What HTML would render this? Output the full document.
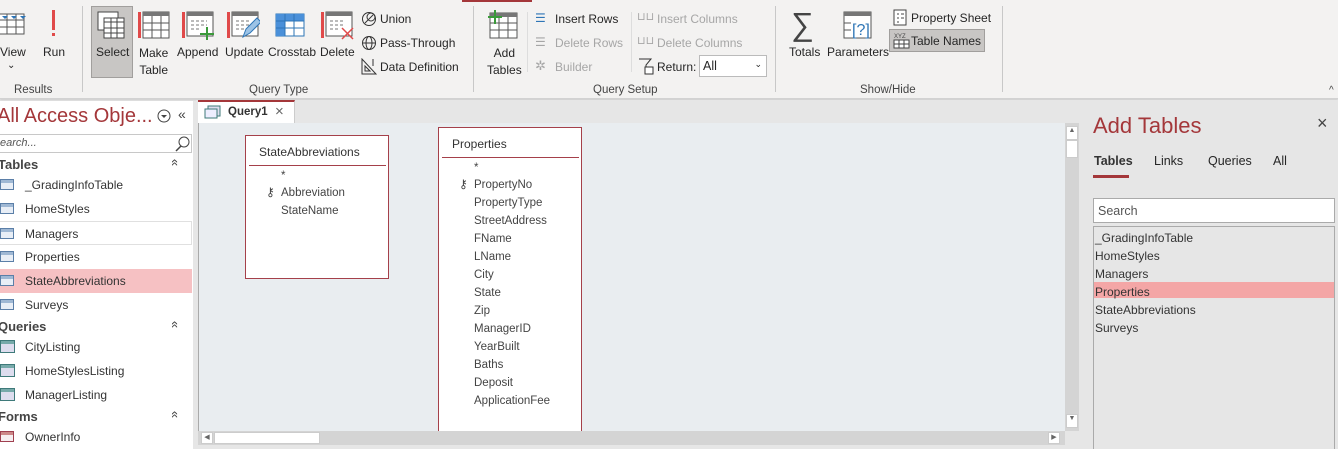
<!DOCTYPE html>
<html><head><meta charset="utf-8"><style>
*{margin:0;padding:0;box-sizing:border-box}
body{width:1338px;height:449px;overflow:hidden;background:#e6e6e6;font-family:"Liberation Sans",sans-serif;color:#262626;position:relative}
.a{position:absolute;white-space:nowrap}
.rb{position:absolute;left:0;top:0;width:1338px;height:99px;background:#f3f2f1;border-bottom:1px solid #d2d2d2;box-shadow:0 1px 2px rgba(0,0,0,.12)}
.lbl{font-size:12px;color:#262626;text-align:center}
.sm{font-size:12px}
.dis{color:#a6a6a6}
.gl{font-size:11.5px;color:#444}
.sep{position:absolute;width:1px;background:#c8c8c8}
.nav{position:absolute;left:0;top:101px;width:193px;height:348px;background:#fff}
.ni{position:absolute;left:0;width:192px;height:24px;font-size:12px;color:#333}
.ni span{position:absolute;left:25px;top:5px}
.nh{position:absolute;left:-2px;font-size:13px;font-weight:bold;color:#444}
.ch{position:absolute;left:172px;font-size:13px;color:#444;transform:rotate(90deg)}
.ic{position:absolute;left:0;top:6px;width:14px;height:11px;border:1px solid #5b7fa8;background:linear-gradient(#9fb8d4 0 3px,#e8eef6 3px)}
.qi{position:absolute;left:0;top:5px;width:15px;height:13px;border:1px solid #3f7a7a;background:linear-gradient(#7aa 0 3px,#dde 3px)}
.fi{position:absolute;left:0;top:6px;width:14px;height:11px;border:1px solid #a04050;background:linear-gradient(#c88 0 3px,#f6eef0 3px)}
.design{position:absolute;left:198px;top:123px;width:867px;height:308px;background:#e9edf0;border-left:1px solid #aaa}
.tbl{position:absolute;background:#fff;border:1px solid #a5404a}
.tbl .t{position:absolute;font-size:12px;color:#333}
.f{position:absolute;font-size:11.5px;color:#444}
.ap{position:absolute;left:1079px;top:100px;width:259px;height:349px;background:#e6e6e6}
</style></head><body>
<div class="rb"></div>
<div class="a" style="left:462px;top:0;width:70px;height:2px;background:#a4373a"></div>
<svg class="a" style="left:0;top:10px" width="28" height="28"><rect x="-2" y="4" width="26" height="20" fill="#fff" stroke="#555"/><path d="M-2 10H24M-2 17H24M7 4V24M16 4V24" stroke="#555"/><path d="M2 6l3 3 3-3zM11 6l3 3 3-3zM20 6l3 3 3-3z" fill="#2e75b6"/></svg>
<div class="a lbl" style="left:0;top:45px">View</div>
<div class="a" style="left:7px;top:60px;font-size:10px">⌄</div>
<div class="a" style="left:52px;top:10px;width:3px;height:20px;background:#e04a4a"></div>
<div class="a" style="left:52px;top:33px;width:3px;height:3px;background:#e04a4a"></div>
<div class="a lbl" style="left:43px;top:45px">Run</div>
<div class="a gl" style="left:14px;top:84px">Results</div>
<div class="sep" style="left:82px;top:6px;height:86px"></div>
<div class="a" style="left:91px;top:6px;width:42px;height:72px;background:#c8c6c4;border:1px solid #a19f9d"></div>
<svg class="a" style="left:96px;top:10px" width="32" height="32"><rect x="2" y="2" width="20" height="18" fill="#fff" stroke="#444"/><rect x="8" y="8" width="20" height="20" fill="#fff" stroke="#444"/><path d="M8 12H28M8 18H28M8 23H28M15 8V28M21 8V28" stroke="#444"/></svg>
<div class="a lbl" style="left:96px;top:45px">Select</div>
<svg class="a" style="left:137px;top:10px" width="34" height="30"><rect x="1" y="2" width="3" height="26" fill="#e04a4a"/><rect x="6" y="2" width="26" height="26" fill="#fff" stroke="#555"/><rect x="6" y="2" width="26" height="4" fill="#777"/><path d="M6 13H32M6 20H32M15 6V28M24 6V28" stroke="#555"/></svg>
<div class="a lbl" style="left:139px;top:45px;line-height:17px">Make<br>Table</div>
<svg class="a" style="left:181px;top:10px" width="34" height="30"><rect x="1" y="2" width="3" height="26" fill="#e04a4a"/><rect x="6" y="2" width="26" height="24" fill="#fff" stroke="#555"/><rect x="6" y="2" width="26" height="4" fill="#777"/><path d="M10 11H26M10 15H26M10 19H20" stroke="#777" stroke-dasharray="3 2"/><path d="M26 17V31M19 24H33" stroke="#3a9a3a" stroke-width="2"/></svg>
<div class="a lbl" style="left:177px;top:45px">Append</div>
<svg class="a" style="left:226px;top:10px" width="34" height="30"><rect x="1" y="2" width="3" height="26" fill="#e04a4a"/><rect x="6" y="2" width="26" height="24" fill="#fff" stroke="#555"/><rect x="6" y="2" width="26" height="4" fill="#777"/><path d="M10 11H24M10 15H24M10 19H20" stroke="#777" stroke-dasharray="3 2"/><path d="M17 27l3-8 11-11 4 4-11 11z" fill="#9cc3e6" stroke="#2e75b6"/></svg>
<div class="a lbl" style="left:225px;top:45px">Update</div>
<svg class="a" style="left:275px;top:13px" width="30" height="24"><rect x="1" y="1" width="28" height="22" fill="#fff" stroke="#2e75b6"/><rect x="1" y="1" width="28" height="7" fill="#4a90d9"/><rect x="1" y="1" width="9" height="22" fill="#4a90d9"/><path d="M1 8H29M1 15H29M10 1V23M19 1V23" stroke="#2e75b6"/></svg>
<div class="a lbl" style="left:268px;top:45px">Crosstab</div>
<svg class="a" style="left:320px;top:10px" width="34" height="30"><rect x="1" y="2" width="3" height="26" fill="#e04a4a"/><rect x="6" y="2" width="26" height="24" fill="#fff" stroke="#555"/><rect x="6" y="2" width="26" height="4" fill="#777"/><path d="M10 11H24M10 15H24M10 19H20" stroke="#777" stroke-dasharray="3 2"/><path d="M22 18l11 11M33 18L22 29" stroke="#e04a4a" stroke-width="1.5"/></svg>
<div class="a lbl" style="left:320px;top:45px">Delete</div>
<svg class="a" style="left:361px;top:11px" width="16" height="16"><circle cx="8" cy="8" r="6.5" fill="none" stroke="#333"/><path d="M4 12L12 4" stroke="#333"/><circle cx="10" cy="6" r="4" fill="none" stroke="#333"/></svg>
<div class="a sm" style="left:380px;top:12px">Union</div>
<svg class="a" style="left:361px;top:35px" width="16" height="16"><circle cx="8" cy="8" r="6.5" fill="none" stroke="#333"/><ellipse cx="8" cy="8" rx="3" ry="6.5" fill="none" stroke="#333"/><path d="M1.5 8H14.5" stroke="#333"/></svg>
<div class="a sm" style="left:380px;top:36px">Pass-Through</div>
<svg class="a" style="left:361px;top:58px" width="16" height="17"><path d="M1 1V16H15z" fill="none" stroke="#333"/><path d="M4 8V13H9z" fill="none" stroke="#333"/><path d="M12 1V8" stroke="#333"/></svg>
<div class="a sm" style="left:380px;top:60px">Data Definition</div>
<div class="a gl" style="left:249px;top:84px">Query Type</div>
<div class="sep" style="left:473px;top:6px;height:86px"></div>
<svg class="a" style="left:487px;top:10px" width="32" height="30"><rect x="3" y="3" width="27" height="25" fill="#fff" stroke="#555"/><rect x="3" y="3" width="27" height="4" fill="#777"/><path d="M3 13H30M3 20H30M12 7V28M21 7V28" stroke="#555"/><path d="M8 0V14M1 7H15" stroke="#3a9a3a" stroke-width="2"/></svg>
<div class="a lbl" style="left:487px;top:45px;line-height:17px">Add<br>Tables</div>
<div class="sep" style="left:527px;top:12px;height:60px;background:#ddd"></div>
<div class="a" style="left:535px;top:11px;font-size:12px;color:#2e75b6">☰</div>
<div class="a sm" style="left:555px;top:12px">Insert Rows</div>
<div class="a dis" style="left:535px;top:35px;font-size:12px">☰</div>
<div class="a sm dis" style="left:555px;top:36px">Delete Rows</div>
<div class="a dis" style="left:535px;top:58px;font-size:13px">✲</div>
<div class="a sm dis" style="left:555px;top:60px">Builder</div>
<div class="sep" style="left:631px;top:12px;height:60px;background:#ddd"></div>
<div class="a dis" style="left:637px;top:10px;font-size:11px">⊔⊔</div>
<div class="a sm dis" style="left:657px;top:12px">Insert Columns</div>
<div class="a dis" style="left:637px;top:34px;font-size:11px">⊔⊔</div>
<div class="a sm dis" style="left:657px;top:36px">Delete Columns</div>
<svg class="a" style="left:638px;top:58px" width="16" height="17"><path d="M1 1H13L8 7V14" fill="none" stroke="#333"/><rect x="7" y="9" width="8" height="7" fill="#fff" stroke="#333"/></svg>
<div class="a sm" style="left:657px;top:60px">Return:</div>
<div class="a" style="left:699px;top:55px;width:68px;height:22px;background:#fff;border:1px solid #bbb;font-size:12.5px;padding:3px 3px">All<span style="position:absolute;right:4px;top:3px;font-size:9px">⌄</span></div>
<div class="a gl" style="left:593px;top:84px">Query Setup</div>
<div class="sep" style="left:775px;top:6px;height:86px"></div>
<div class="a" style="left:791px;top:6px;font-size:32px;color:#444">∑</div>
<div class="a lbl" style="left:789px;top:45px">Totals</div>
<svg class="a" style="left:841px;top:10px" width="32" height="30"><rect x="3" y="2" width="27" height="26" fill="#fff" stroke="#555"/><rect x="3" y="2" width="27" height="4" fill="#777"/><path d="M3 13H10M3 20H10" stroke="#555"/><text x="11" y="25" font-size="16" fill="#2e75b6" font-family="Liberation Sans">[?]</text></svg>
<div class="a lbl" style="left:827px;top:45px">Parameters</div>
<svg class="a" style="left:893px;top:9px" width="14" height="17"><rect x="1" y="1" width="12" height="15" fill="#fff" stroke="#444"/><path d="M4 5h2M4 9h2M4 13h2M8 5h3M8 9h3" stroke="#444"/></svg>
<div class="a sm" style="left:911px;top:11px">Property Sheet</div>
<div class="a" style="left:889px;top:29px;width:96px;height:23px;background:#c8c6c4;border:1px solid #a19f9d"></div>
<svg class="a" style="left:893px;top:32px" width="17" height="17"><text x="1" y="6" font-size="6" fill="#444" font-family="Liberation Sans">XYZ</text><rect x="1" y="8" width="15" height="8" fill="#fff" stroke="#444"/><path d="M1 12H16M6 8V16M11 8V16" stroke="#444"/></svg>
<div class="a sm" style="left:911px;top:34px">Table Names</div>
<div class="a gl" style="left:860px;top:84px">Show/Hide</div>
<div class="sep" style="left:1002px;top:6px;height:86px"></div>
<div class="a" style="left:1329px;top:85px;font-size:10px;color:#444">^</div>

<div class="nav"></div>
<div class="a" style="left:-3px;top:105px;font-size:20px;color:#a4373a">All Access Obje...</div>
<svg class="a" style="left:157px;top:109px" width="14" height="14"><circle cx="7" cy="7" r="6" fill="none" stroke="#444"/><path d="M4 6h6l-3 3z" fill="#444"/></svg>
<div class="a" style="left:178px;top:106px;font-size:14px;color:#444">«</div>
<div class="a" style="left:0;top:134px;width:192px;height:19px;border:1px solid #c8c8c8;border-left:none;background:#fff"></div>
<div class="a" style="left:0;top:137px;font-size:11px;font-style:italic;color:#555">earch...</div>
<svg class="a" style="left:174px;top:135px" width="17" height="17"><circle cx="10" cy="7" r="5" fill="none" stroke="#444"/><path d="M7 11L2 16" stroke="#444" stroke-width="1.5"/></svg>
<div class="nh" style="top:157px">Tables</div><div class="ch" style="top:155px">«</div>
<div class="ni" style="top:173px"><i class="ic"></i><span>_GradingInfoTable</span></div>
<div class="ni" style="top:197px"><i class="ic"></i><span>HomeStyles</span></div>
<div class="ni" style="top:221px;border:1px solid #e0e0e0;border-left:none"><i class="ic"></i><span>Managers</span></div>
<div class="ni" style="top:245px"><i class="ic"></i><span>Properties</span></div>
<div class="ni" style="top:269px;background:#f6c1c3"><i class="ic"></i><span>StateAbbreviations</span></div>
<div class="ni" style="top:293px"><i class="ic"></i><span>Surveys</span></div>
<div class="nh" style="top:319px">Queries</div><div class="ch" style="top:317px">«</div>
<div class="ni" style="top:335px"><i class="qi"></i><span>CityListing</span></div>
<div class="ni" style="top:359px"><i class="qi"></i><span>HomeStylesListing</span></div>
<div class="ni" style="top:383px"><i class="qi"></i><span>ManagerListing</span></div>
<div class="nh" style="top:409px">Forms</div><div class="ch" style="top:407px">«</div>
<div class="ni" style="top:425px"><i class="fi"></i><span>OwnerInfo</span></div>
<div class="a" style="left:193px;top:101px;width:3px;height:348px;background:#e6e6e6"></div>

<div class="a" style="left:196px;top:100px;width:883px;height:23px;background:#e6e6e6"></div>
<div class="a" style="left:198px;top:100px;width:97px;height:24px;background:#fff;border-top:2px solid #a4373a;border-right:1px solid #ccc"></div>
<svg class="a" style="left:204px;top:105px" width="17" height="14"><rect x="4" y="1" width="12" height="10" fill="#dde" stroke="#3f7a7a"/><rect x="1" y="4" width="12" height="9" fill="#eef" stroke="#3f7a7a"/></svg>
<div class="a" style="left:228px;top:106px;font-size:11.5px;font-weight:bold;color:#333">Query1</div>
<div class="a" style="left:275px;top:103px;font-size:15px;color:#666">×</div>
<div class="design"></div>
<div class="tbl" style="left:245px;top:135px;width:144px;height:144px">
 <div class="t" style="left:13px;top:9px">StateAbbreviations</div>
 <div class="a" style="left:3px;top:29px;width:137px;height:1px;background:#a5404a"></div>
 <div class="f" style="left:35px;top:34px">*</div>
 <div class="f" style="left:20px;top:49px;font-size:12px">⚷</div>
 <div class="f" style="left:35px;top:51px">Abbreviation</div>
 <div class="f" style="left:35px;top:69px">StateName</div>
</div>
<div class="tbl" style="left:438px;top:127px;width:144px;height:304px;border-bottom:none">
 <div class="t" style="left:13px;top:9px">Properties</div>
 <div class="a" style="left:3px;top:29px;width:137px;height:1px;background:#a5404a"></div>
 <div class="f" style="left:35px;top:34px">*</div>
 <div class="f" style="left:20px;top:49px;font-size:12px">⚷</div>
 <div class="f" style="left:35px;top:51px">PropertyNo</div>
 <div class="f" style="left:35px;top:69px">PropertyType</div>
 <div class="f" style="left:35px;top:87px">StreetAddress</div>
 <div class="f" style="left:35px;top:105px">FName</div>
 <div class="f" style="left:35px;top:123px">LName</div>
 <div class="f" style="left:35px;top:141px">City</div>
 <div class="f" style="left:35px;top:159px">State</div>
 <div class="f" style="left:35px;top:177px">Zip</div>
 <div class="f" style="left:35px;top:195px">ManagerID</div>
 <div class="f" style="left:35px;top:213px">YearBuilt</div>
 <div class="f" style="left:35px;top:231px">Baths</div>
 <div class="f" style="left:35px;top:249px">Deposit</div>
 <div class="f" style="left:35px;top:267px">ApplicationFee</div>
</div>
<div class="a" style="left:1065px;top:123px;width:14px;height:308px;background:#d4d4d4"></div>
<div class="a" style="left:1066px;top:126px;width:12px;height:14px;background:#fff;border:1px solid #ccc;font-size:7px;text-align:center;color:#666">▲</div>
<div class="a" style="left:1066px;top:140px;width:12px;height:18px;background:#fff;border:1px solid #ccc"></div>
<div class="a" style="left:1066px;top:414px;width:12px;height:14px;background:#fff;border:1px solid #ccc;font-size:7px;text-align:center;color:#666">▼</div>
<div class="a" style="left:198px;top:431px;width:867px;height:14px;background:#d4d4d4"></div>
<div class="a" style="left:201px;top:432px;width:12px;height:12px;background:#fff;border:1px solid #ccc;font-size:7px;color:#666;text-align:center">◀</div>
<div class="a" style="left:214px;top:432px;width:106px;height:12px;background:#fff;border:1px solid #ccc"></div>
<div class="a" style="left:1048px;top:432px;width:12px;height:12px;background:#fff;border:1px solid #ccc;font-size:7px;color:#666;text-align:center">▶</div>
<div class="a" style="left:196px;top:445px;width:883px;height:4px;background:#e6e6e6"></div>

<div class="ap"></div>
<div class="a" style="left:1093px;top:113px;font-size:22px;color:#a4373a">Add Tables</div>
<div class="a" style="left:1317px;top:113px;font-size:18px;color:#444">×</div>
<div class="a" style="left:1094px;top:154px;font-size:12.5px;font-weight:bold;color:#333">Tables</div>
<div class="a" style="left:1093px;top:175px;width:36px;height:3px;background:#a4373a"></div>
<div class="a" style="left:1154px;top:154px;font-size:12.5px">Links</div>
<div class="a" style="left:1208px;top:154px;font-size:12.5px">Queries</div>
<div class="a" style="left:1273px;top:154px;font-size:12.5px">All</div>
<div class="a" style="left:1093px;top:198px;width:242px;height:25px;background:#fff;border:1px solid #aaa;font-size:12.5px;color:#555;padding:5px 4px">Search</div>
<div class="a" style="left:1093px;top:226px;width:242px;height:223px;border:1px solid #aaa;border-bottom:none;background:#e6e6e6"></div>
<div class="a" style="left:1095px;top:229px;font-size:12px;color:#333;line-height:18px">_GradingInfoTable<br>HomeStyles<br>Managers</div>
<div class="a" style="left:1094px;top:282px;width:240px;height:16px;background:#f4a6a6"></div>
<div class="a" style="left:1095px;top:283px;font-size:12px;color:#333;line-height:18px">Properties<br>StateAbbreviations<br>Surveys</div>
</body></html>
